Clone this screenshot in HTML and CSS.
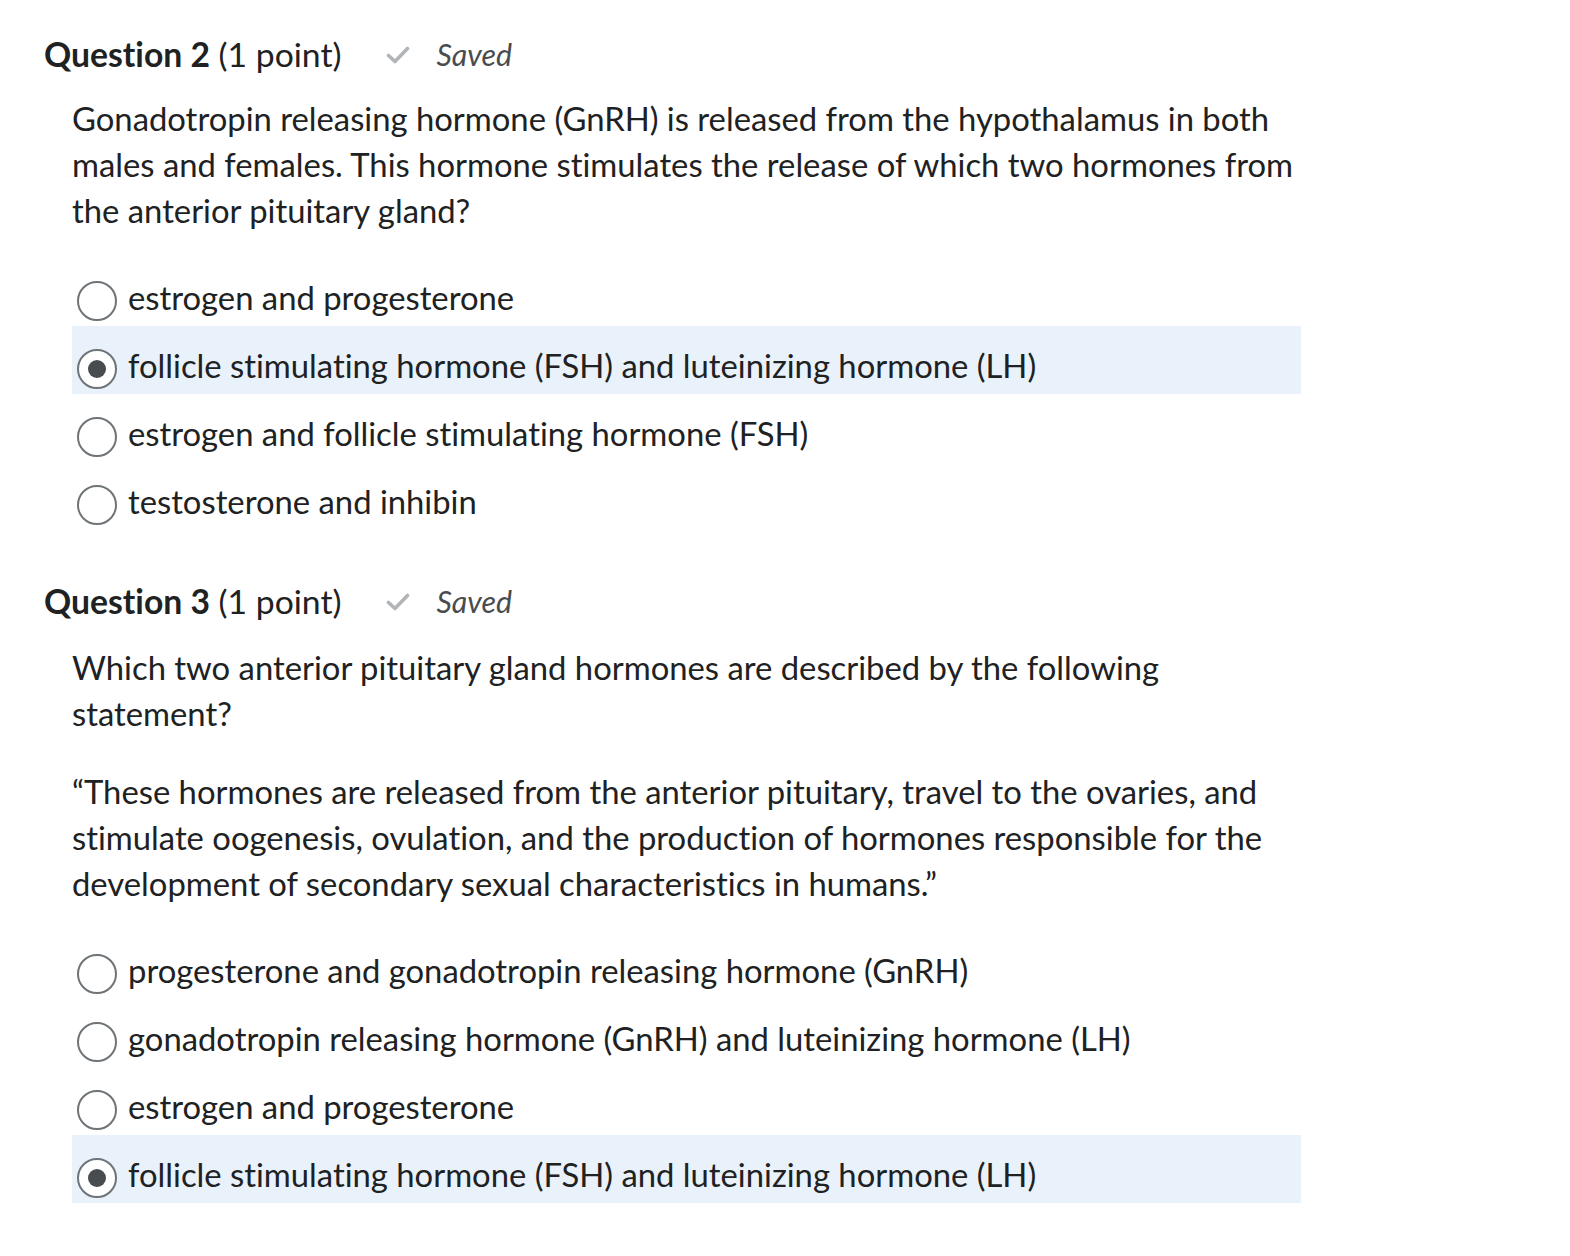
FILE: index.html
```html
<!DOCTYPE html>
<html lang="en">
<head>
<meta charset="utf-8">
<title>Quiz</title>
<link rel="stylesheet" href="styles.css">
</head>
<body>
<main class="page">
  <section class="question">
    <h2 class="q-head">
      <span class="q-title"><strong>Question 2</strong> (1 point)</span>
      <span class="saved">
        <svg class="check" viewBox="0 0 24 18" width="24" height="18" aria-hidden="true"><path d="M2.5 9.5 L9 15.5 L21.5 2.5" fill="none" stroke="#b1b5b8" stroke-width="3.6" stroke-linecap="round" stroke-linejoin="round"/></svg>
        <em>Saved</em>
      </span>
    </h2>
    <div class="q-body">
      <p>Gonadotropin releasing hormone (GnRH) is released from the hypothalamus in both males and females. This hormone stimulates the release of which two hormones from the anterior pituitary gland?</p>
      <ul class="options">
        <li class="opt"><span class="radio"></span><span>estrogen and progesterone</span></li>
        <li class="opt selected"><span class="radio"></span><span>follicle stimulating hormone (FSH) and luteinizing hormone (LH)</span></li>
        <li class="opt"><span class="radio"></span><span>estrogen and follicle stimulating hormone (FSH)</span></li>
        <li class="opt"><span class="radio"></span><span>testosterone and inhibin</span></li>
      </ul>
    </div>
  </section>

  <section class="question q3">
    <h2 class="q-head">
      <span class="q-title"><strong>Question 3</strong> (1 point)</span>
      <span class="saved">
        <svg class="check" viewBox="0 0 24 18" width="24" height="18" aria-hidden="true"><path d="M2.5 9.5 L9 15.5 L21.5 2.5" fill="none" stroke="#b1b5b8" stroke-width="3.6" stroke-linecap="round" stroke-linejoin="round"/></svg>
        <em>Saved</em>
      </span>
    </h2>
    <div class="q-body">
      <p>Which two anterior pituitary gland hormones are described by the following statement?</p>
      <p class="quote">“These hormones are released from the anterior pituitary, travel to the ovaries, and stimulate oogenesis, ovulation, and the production of hormones responsible for the development of secondary sexual characteristics in humans.”</p>
      <ul class="options">
        <li class="opt"><span class="radio"></span><span>progesterone and gonadotropin releasing hormone (GnRH)</span></li>
        <li class="opt"><span class="radio"></span><span>gonadotropin releasing hormone (GnRH) and luteinizing hormone (LH)</span></li>
        <li class="opt"><span class="radio"></span><span>estrogen and progesterone</span></li>
        <li class="opt selected"><span class="radio"></span><span>follicle stimulating hormone (FSH) and luteinizing hormone (LH)</span></li>
      </ul>
    </div>
  </section>
</main>
</body>
</html>
```

FILE: styles.css
```css
html, body {
  margin: 0;
  padding: 0;
  background: #ffffff;
}

body {
  font-family: Lato, "Noto Sans", "Liberation Sans", sans-serif;
  color: #202122;
  font-variant-ligatures: none;
  font-feature-settings: "liga" 0, "clig" 0;
}

.page {
  padding: 34px 0 0 44px;
}

.question.q3 {
  margin-top: 51px;
}

.q-head {
  display: flex;
  align-items: center;
  margin: 0;
  height: 40px;
  font-size: 33.7px;
  font-weight: 400;
  line-height: 40px;
  color: #202122;
}

.q-head strong {
  font-weight: 700;
}

.saved {
  display: inline-flex;
  align-items: center;
  margin-left: 45px;
  font-size: 30.3px;
  color: #494c4e;
}

.check {
  margin-right: 26px;
  margin-top: 1px;
}

.saved em {
  font-style: italic;
}

.q-body {
  margin: 22px 0 0 28px;
  width: 1229px;
}

.q3 .q-body {
  margin-top: 24px;
}

.q-body p {
  margin: 0;
  font-size: 32.8px;
  line-height: 46px;
}

.q-body p.quote {
  margin-top: 32px;
}

.options {
  list-style: none;
  margin: 24px 0 0 0;
  padding: 0;
}

.opt {
  display: flex;
  align-items: center;
  height: 68px;
  padding-left: 5px;
  font-size: 32.8px;
  line-height: 46px;
  box-sizing: border-box;
  padding-top: 12px;
}

.opt.selected {
  background: #e9f1fb;
}

.radio {
  flex: none;
  box-sizing: border-box;
  width: 40px;
  height: 40px;
  border: 2px solid #6e7477;
  border-radius: 50%;
  background: #ffffff;
  margin-right: 11px;
  margin-top: 6px;
  display: flex;
  align-items: center;
  justify-content: center;
}

.opt.selected .radio::after {
  content: "";
  width: 18px;
  height: 18px;
  border-radius: 50%;
  background: #494c4e;
}
```
